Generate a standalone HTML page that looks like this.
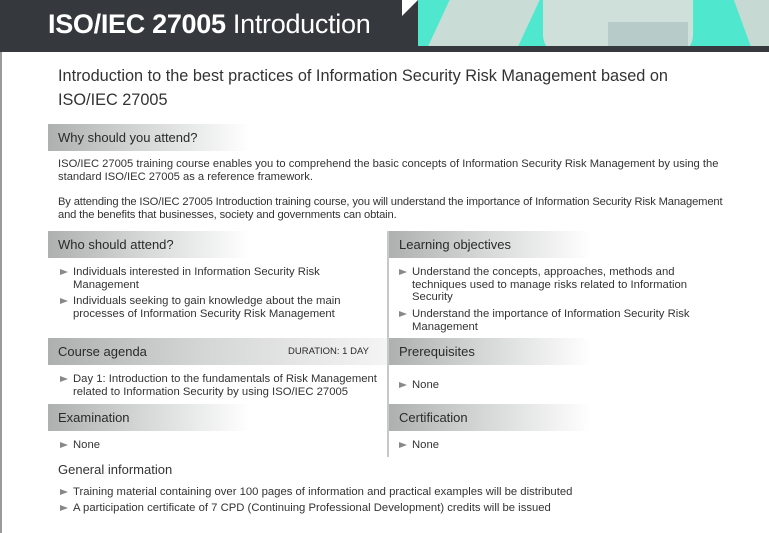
<!DOCTYPE html>
<html><head><meta charset="utf-8"><style>
*{margin:0;padding:0;box-sizing:border-box}
body{width:769px;height:533px;background:#fff;font-family:"Liberation Sans",sans-serif;color:#333;position:relative;overflow:hidden}
.a{position:absolute;white-space:nowrap}
.hdr{position:absolute;height:27px;background:linear-gradient(90deg,#aeb0b0 0%,#d4d5d5 45%,#fff 100%);font-size:13px;line-height:27px;padding-left:10px;color:#2a2a2a}
.t{font-size:11.2px;line-height:13px;color:#333}
.li{position:absolute;font-size:11.3px;line-height:13px;color:#333;padding-left:15px;white-space:nowrap}
.li:before{content:"";position:absolute;left:2px;top:3px;width:0;height:0;border-left:8px solid #888;border-top:3.5px solid transparent;border-bottom:3.5px solid transparent}
</style></head><body>
<div class="a" style="left:0;top:0;width:769px;height:52px;background:#35383d"></div>
<div class="a" style="left:418px;top:0;width:351px;height:46px;background:#4fe8cf;overflow:hidden">
 <div class="a" style="left:20px;top:-10px;width:90px;height:70px;background:#c9ddd6;transform:skewX(-25deg);border-radius:10px"></div>
 <div class="a" style="left:125px;top:-5px;width:150px;height:60px;background:#cfe0da;border-radius:0 0 20px 20px"></div>
 <div class="a" style="left:190px;top:22px;width:80px;height:30px;background:#b7ccc8"></div>
 <div class="a" style="left:325px;top:-5px;width:35px;height:60px;background:#c6d9d3;transform:skewX(20deg)"></div>
</div>
<div class="a" style="left:402px;top:0;width:0;height:0;border-left:16px solid #fff;border-bottom:16px solid transparent"></div>
<div class="a" style="left:0;top:52px;width:2px;height:481px;background:#9a9a9a"></div>
<div class="a" style="left:48px;top:7px;font-size:27px;line-height:34px;color:#fff;letter-spacing:-0.3px"><b>ISO/IEC 27005</b> Introduction</div>
<div class="a" style="left:58px;top:64px;font-size:16.3px;line-height:24px;color:#333">Introduction to the best practices of Information Security Risk Management based on<br>ISO/IEC 27005</div>
<div class="hdr" style="left:48px;top:124px;width:202px">Why should you attend?</div>
<div class="a t" style="left:58px;top:158px">ISO/IEC 27005 training course enables you to comprehend the basic concepts of Information Security Risk Management by using the<br>standard ISO/IEC 27005 as a reference framework.</div>
<div class="a t" style="left:58px;top:196px;letter-spacing:-0.15px">By attending the ISO/IEC 27005 Introduction training course, you will understand the importance of Information Security Risk Management<br>and the benefits that businesses, society and governments can obtain.</div>
<div class="a" style="left:387px;top:231px;width:2px;height:226px;background:#c8c8c8"></div>
<div class="hdr" style="left:48px;top:231px;width:202px">Who should attend?</div>
<div class="li" style="left:58px;top:266px">Individuals interested in Information Security Risk<br>Management</div>
<div class="li" style="left:58px;top:295px">Individuals seeking to gain knowledge about the main<br>processes of Information Security Risk Management</div>
<div class="hdr" style="left:389px;top:231px;width:202px">Learning objectives</div>
<div class="li" style="left:397px;top:266px;line-height:12.5px">Understand the concepts, approaches, methods and<br>techniques used to manage risks related to Information<br>Security</div>
<div class="li" style="left:397px;top:308px">Understand the importance of Information Security Risk<br>Management</div>
<div class="hdr" style="left:48px;top:338px;width:339px;background:linear-gradient(90deg,#aeb0b0 0%,#d4d5d5 45%,#f4f4f4 100%)">Course agenda<span style="position:absolute;left:240px;font-size:9.5px">DURATION: 1 DAY</span></div>
<div class="li" style="left:58px;top:373px">Day 1: Introduction to the fundamentals of Risk Management<br>related to Information Security by using ISO/IEC 27005</div>
<div class="hdr" style="left:389px;top:338px;width:202px">Prerequisites</div>
<div class="li" style="left:397px;top:379px">None</div>
<div class="hdr" style="left:48px;top:404px;width:202px">Examination</div>
<div class="li" style="left:58px;top:439px">None</div>
<div class="hdr" style="left:389px;top:404px;width:202px">Certification</div>
<div class="li" style="left:397px;top:439px">None</div>
<div class="a" style="left:58px;top:462px;font-size:13px;line-height:16px">General information</div>
<div class="li" style="left:58px;top:486px">Training material containing over 100 pages of information and practical examples will be distributed</div>
<div class="li" style="left:58px;top:502px">A participation certificate of 7 CPD (Continuing Professional Development) credits will be issued</div>
</body></html>
